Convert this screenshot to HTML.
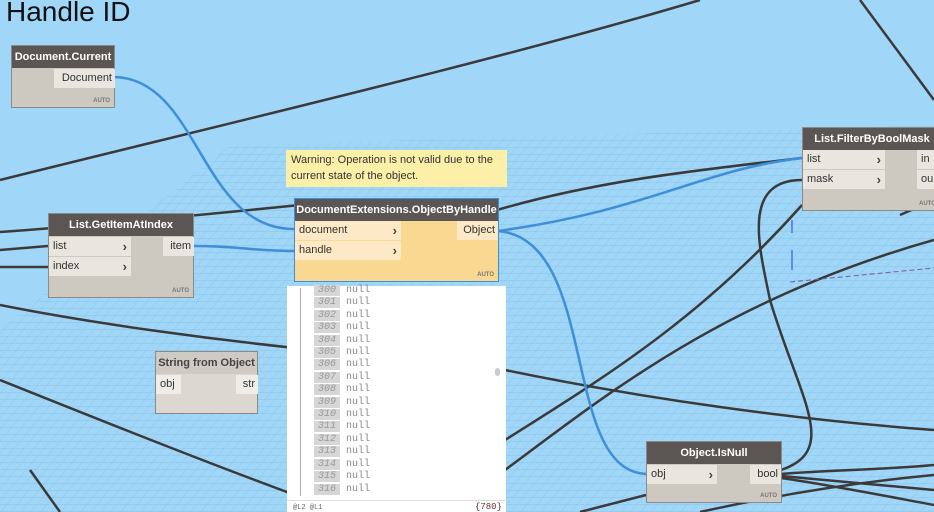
<!DOCTYPE html>
<html><head><meta charset="utf-8"><style>
*{margin:0;padding:0;box-sizing:border-box}
body{width:934px;height:512px;overflow:hidden;background:#a0d6f8;font-family:"Liberation Sans",sans-serif;position:relative}
.n{position:absolute;background:#cdc9c1;border:1px solid #8d8a86}
.h{background:#5b5653;color:#fff;font-weight:bold;font-size:11px;text-align:center;height:22px;line-height:22px;white-space:nowrap;overflow:hidden}
.r{position:absolute;font-size:11px;color:#333;height:19px;line-height:19px;padding-left:4px;background:#e9e5df}
.r.o{text-align:right;padding-right:3px;padding-left:0}
.ar{position:absolute;right:4px;top:0;font-weight:bold;color:#444;font-size:13px}
.auto{position:absolute;right:4px;bottom:3px;font-size:6px;font-weight:bold;color:#777}
.t{position:absolute;font-size:28px;left:6px;top:-4px;color:#111}
.m div span{background:#d6d6d6;padding:0 4px;font-style:italic;color:#999}
</style></head><body>
<svg width="934" height="512" style="position:absolute;left:0;top:0">
<defs><pattern id="g" width="10" height="7" patternUnits="userSpaceOnUse" patternTransform="skewX(-40)"><path d="M0 0H10M0 0V7" stroke="#84bade" stroke-width="0.8" fill="none"/></pattern></defs>
<polygon points="230,145 934,125 934,512 0,512 0,330" fill="url(#g)" opacity="0.9"/>
<g fill="none" stroke="#3a3a3a" stroke-width="2.5">
<path d="M0 180 C200 130 500 60 700 0"/>
<path d="M0 232 C100 225 250 210 300 205"/>
<path d="M497 210 C600 180 700 170 802 158"/>
<path d="M0 250 L48 246"/>
<path d="M0 267 L48 267"/>
<path d="M0 305 C100 325 220 340 295 348"/>
<path d="M0 380 C100 420 200 460 295 495"/>
<path d="M30 470 L60 512"/>
<path d="M505 370 C650 400 800 420 934 430"/>
<path d="M505 470 C600 400 720 300 934 240"/>
<path d="M505 440 C600 380 700 320 802 205"/>
<path d="M802 180 C740 180 760 250 770 300 C800 400 840 450 781 470"/>
<path d="M781 474 C830 470 880 470 934 465"/>
<path d="M781 476 C830 480 880 485 934 490"/>
<path d="M781 478 C830 485 880 495 934 505"/>
<path d="M700 512 C800 490 880 480 934 475"/>
<path d="M860 0 L934 100"/>
<path d="M900 215 L934 200"/>
<path d="M580 512 L646 495"/>
</g>
<path d="M790 282 L934 268" stroke="#7a5aa0" stroke-dasharray="5 3" fill="none"/>
<path d="M792 220V233M792 250V270" stroke="#2244cc"/>
<g fill="none" stroke="#3f8fd8" stroke-width="2.5">
<path d="M115 77 C200 80 200 230 295 229"/>
<path d="M194 246 C240 246 250 251 295 251"/>
<path d="M498 231 C650 210 700 170 802 158"/>
<path d="M498 231 C600 240 560 470 646 474"/>
</g>
</svg>
<div class="t">Handle ID</div>

<div class="n" style="left:11px;top:45px;width:104px;height:63px">
<div class="h">Document.Current</div>
<div class="r o" style="left:42px;top:23px;width:61px">Document</div>
<div class="auto">AUTO</div></div>

<div class="n" style="left:48px;top:213px;width:146px;height:85px">
<div class="h">List.GetItemAtIndex</div>
<div class="r" style="left:0;top:23px;width:82px">list<span class="ar">›</span></div>
<div class="r" style="left:0;top:43px;width:82px">index<span class="ar">›</span></div>
<div class="r o" style="left:114px;top:23px;width:31px">item</div>
<div class="auto">AUTO</div></div>

<div style="position:absolute;left:286px;top:150px;width:221px;height:37px;background:#fcefa8;font-size:11px;color:#333;padding:2px 5px;line-height:16px">Warning: Operation is not valid due to the current state of the object.</div>

<div class="n" style="left:294px;top:198px;width:205px;height:84px;background:#f9d892;border:1px solid #3e8ed8">
<div class="h">DocumentExtensions.ObjectByHandle</div>
<div class="r" style="left:0;top:22px;width:106px;background:#fde9c5">document<span class="ar">›</span></div>
<div class="r" style="left:0;top:42px;width:106px;background:#fde9c5">handle<span class="ar">›</span></div>
<div class="r o" style="left:162px;top:22px;width:41px;background:#fde9c5">Object</div>
<div class="auto">AUTO</div></div>

<div class="m" style="position:absolute;left:287px;top:286px;width:219px;height:226px;background:#fff;font-family:'Liberation Mono',monospace;font-size:10px;color:#888">
<div style="position:absolute;left:13px;top:2px;width:1px;height:208px;background:#aaa"></div>
<div style="position:absolute;left:208px;top:82px;width:5px;height:8px;border-radius:3px;background:#ccc"></div>
<div style="position:absolute;left:0;top:214px;width:219px;height:1px;background:#ddd"></div>
<div style="position:absolute;left:6px;top:218px;font-size:7px;color:#666">@L2 @L1</div>
<div style="position:absolute;right:4px;top:216px;font-size:9px;color:#633">{780}</div>
<div style="position:absolute;left:27px;top:-1px;line-height:12.4px">
<div><span>300</span> null</div>
<div><span>301</span> null</div>
<div><span>302</span> null</div>
<div><span>303</span> null</div>
<div><span>304</span> null</div>
<div><span>305</span> null</div>
<div><span>306</span> null</div>
<div><span>307</span> null</div>
<div><span>308</span> null</div>
<div><span>309</span> null</div>
<div><span>310</span> null</div>
<div><span>311</span> null</div>
<div><span>312</span> null</div>
<div><span>313</span> null</div>
<div><span>314</span> null</div>
<div><span>315</span> null</div>
<div><span>316</span> null</div>
</div></div>

<div class="n" style="left:155px;top:351px;width:103px;height:63px;background:#dcd8d1">
<div class="h" style="background:#cfcac3;color:#444">String from Object</div>
<div class="r" style="left:0;top:23px;width:25px;background:#f0ede8">obj</div>
<div class="r o" style="left:80px;top:23px;width:22px;background:#f0ede8">str</div></div>

<div class="n" style="left:802px;top:127px;width:140px;height:84px">
<div class="h">List.FilterByBoolMask</div>
<div class="r" style="left:0;top:22px;width:82px">list<span class="ar">›</span></div>
<div class="r" style="left:0;top:42px;width:82px">mask<span class="ar">›</span></div>
<div class="r" style="left:114px;top:22px;width:30px">in</div>
<div class="r" style="left:114px;top:42px;width:30px">ou</div>
<div class="auto" style="right:auto;left:116px">AUTO</div></div>

<div class="n" style="left:646px;top:441px;width:136px;height:62px">
<div class="h">Object.IsNull</div>
<div class="r" style="left:0;top:23px;width:70px">obj<span class="ar">›</span></div>
<div class="r o" style="left:103px;top:23px;width:31px">bool</div>
<div class="auto">AUTO</div></div>
</body></html>
